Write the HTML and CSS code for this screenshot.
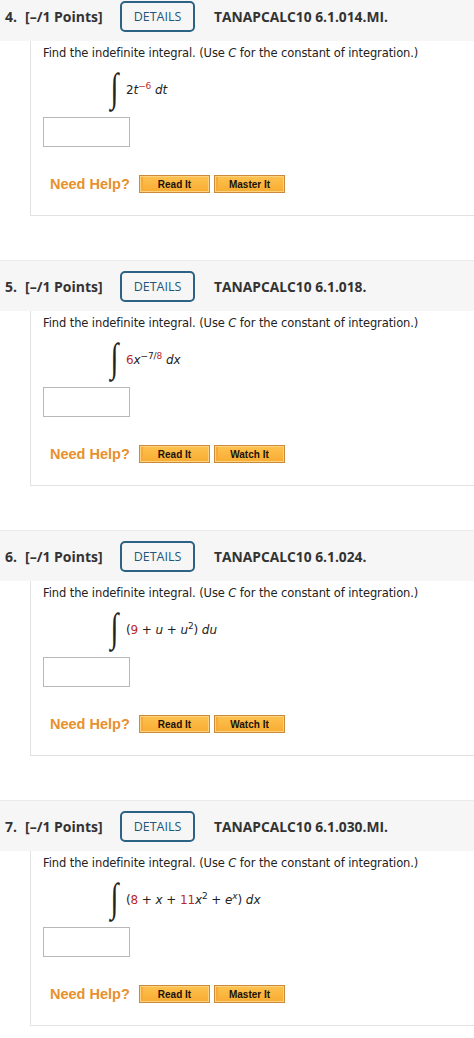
FILE: index.html
```html
<!DOCTYPE html>
<html>
<head>
<meta charset="utf-8">
<link rel="stylesheet" href="styles.css">
</head>
<body>
<div class="question first">
  <div class="qhead">
    <span class="qnum"><span class="n">4.</span>[–/1 Points]</span>
    <span class="details">DETAILS</span>
    <span class="qcode">TANAPCALC10 6.1.014.MI.</span>
  </div>
  <div class="qbody">
    <div class="prompt">Find the indefinite integral. (Use <i>C</i> for the constant of integration.)</div>
    <div class="integral"><span class="intsign">∫</span><span class="expr">2<i>t</i><sup class="red">−6</sup> <i>dt</i></span></div>
    <div class="answer"></div>
    <div class="help"><span class="needhelp">Need Help?</span><span class="hbtn">Read It</span><span class="hbtn">Master It</span></div>
  </div>
</div>
<div class="question">
  <div class="qhead">
    <span class="qnum"><span class="n">5.</span>[–/1 Points]</span>
    <span class="details">DETAILS</span>
    <span class="qcode">TANAPCALC10 6.1.018.</span>
  </div>
  <div class="qbody">
    <div class="prompt">Find the indefinite integral. (Use <i>C</i> for the constant of integration.)</div>
    <div class="integral"><span class="intsign">∫</span><span class="expr"><span class="red">6</span><i>x</i><sup>−7/<span class="red">8</span></sup> <i>dx</i></span></div>
    <div class="answer"></div>
    <div class="help"><span class="needhelp">Need Help?</span><span class="hbtn">Read It</span><span class="hbtn">Watch It</span></div>
  </div>
</div>
<div class="question">
  <div class="qhead">
    <span class="qnum"><span class="n">6.</span>[–/1 Points]</span>
    <span class="details">DETAILS</span>
    <span class="qcode">TANAPCALC10 6.1.024.</span>
  </div>
  <div class="qbody">
    <div class="prompt">Find the indefinite integral. (Use <i>C</i> for the constant of integration.)</div>
    <div class="integral"><span class="intsign">∫</span><span class="expr">(<span class="red">9</span> + <i>u</i> + <i>u</i><sup>2</sup>) <i>du</i></span></div>
    <div class="answer"></div>
    <div class="help"><span class="needhelp">Need Help?</span><span class="hbtn">Read It</span><span class="hbtn">Watch It</span></div>
  </div>
</div>
<div class="question">
  <div class="qhead">
    <span class="qnum"><span class="n">7.</span>[–/1 Points]</span>
    <span class="details">DETAILS</span>
    <span class="qcode">TANAPCALC10 6.1.030.MI.</span>
  </div>
  <div class="qbody">
    <div class="prompt">Find the indefinite integral. (Use <i>C</i> for the constant of integration.)</div>
    <div class="integral"><span class="intsign">∫</span><span class="expr">(<span class="red">8</span> + <i>x</i> + <span class="red">11</span><i>x</i><sup>2</sup> + <i>e</i><sup><i>x</i></sup>) <i>dx</i></span></div>
    <div class="answer"></div>
    <div class="help"><span class="needhelp">Need Help?</span><span class="hbtn">Read It</span><span class="hbtn">Master It</span></div>
  </div>
</div>
</body>
</html>
```
FILE: styles.css
```css
html, body {
  margin: 0;
  padding: 0;
  background: #ffffff;
}
body {
  width: 474px;
  overflow: hidden;
}
.question {
  margin-bottom: 44px;
}
.question.first {
  margin-top: -10px;
}
.qhead {
  height: 50px;
  background: #f6f6f6;
  border-top: 1px solid #ebebeb;
  display: flex;
  align-items: center;
  padding-left: 5px;
  font-family: "Open Sans", sans-serif;
  font-weight: 700;
  color: #333333;
}
.qnum {
  font-size: 14px;
  width: 96px;
  white-space: nowrap;
}
.qnum .n {
  margin-right: 8px;
}
.details {
  margin-left: 19px;
  width: 71px;
  height: 27px;
  border: 2px solid #2c6384;
  border-radius: 5px;
  display: flex;
  align-items: center;
  justify-content: center;
  font-weight: 400;
  font-size: 12.5px;
  color: #245676;
}
.qcode {
  margin-left: 19px;
  font-size: 13.8px;
  white-space: nowrap;
}
.qbody {
  margin-left: 30px;
  border-left: 1px solid #e2e2e2;
  border-bottom: 1px solid #e2e2e2;
  padding: 4px 0 22px 12px;
  font-family: "DejaVu Sans", Verdana, sans-serif;
  color: #222222;
}
.prompt {
  font-size: 11.5px;
  line-height: 16px;
  white-space: nowrap;
  letter-spacing: -0.1px;
}
.integral {
  margin-top: 14px;
  height: 32px;
  display: flex;
  align-items: center;
  padding-left: 66px;
}
.intsign {
  font-family: "Liberation Serif", serif;
  font-size: 40px;
  line-height: 32px;
  height: 32px;
  transform: scaleX(0.72) translateY(-3px);
  display: inline-block;
  color: #222;
}
.expr {
  margin-left: 6px;
  margin-top: -3px;
  font-size: 12px;
  letter-spacing: -0.1px;
}
.expr sup {
  font-size: 9px;
  vertical-align: 5px;
  line-height: 0;
}
.red {
  color: #b8282a;
}
.answer {
  margin-top: 10px;
  width: 85px;
  height: 28px;
  border: 1px solid #b8b8b8;
}
.help {
  margin-top: 28px;
  height: 18px;
  display: flex;
  align-items: center;
  padding-left: 7px;
}
.needhelp {
  font-family: "Liberation Sans", Arial, sans-serif;
  font-weight: 700;
  font-size: 14.5px;
  color: #e8902c;
  width: 89px;
}
.hbtn {
  box-sizing: border-box;
  width: 71px;
  height: 18px;
  margin-right: 4px;
  border: 1px solid #c98a3a;
  box-shadow: inset 0 0 0 1px #fcd27e, inset 2px 0 0 1px #f7a93a;
  background: linear-gradient(#fdc24f, #f8ac32);
  display: flex;
  align-items: center;
  justify-content: center;
  font-family: "Liberation Sans", Arial, sans-serif;
  font-weight: 700;
  font-size: 10px;
  color: #1a1208;
}
```
